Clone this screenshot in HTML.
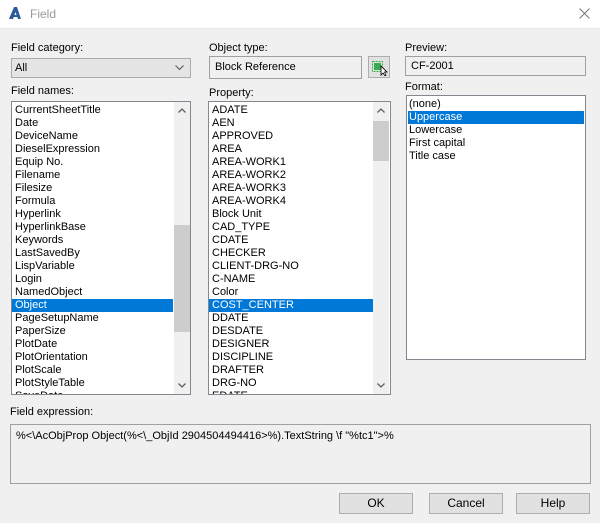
<!DOCTYPE html>
<html><head><meta charset="utf-8"><style>
*{box-sizing:border-box;margin:0;padding:0}
body{width:600px;height:523px;background:#f0f0f0;font-family:"Liberation Sans",Tahoma,sans-serif;font-size:11px;color:#000;position:relative;overflow:hidden}
.a{position:absolute}
.title{left:0;top:0;width:600px;height:29px;background:#fff;border-bottom:1px solid #e8e8e8}
.lbl{position:absolute;white-space:nowrap;line-height:13px}
.box{position:absolute;border:1px solid #828790;background:#fff;overflow:hidden}
.row{height:13px;line-height:13px;padding-left:3px;white-space:nowrap}
.sel{background:#0078d7;color:#fff}
.sb{position:absolute;top:0;right:0;width:16px;bottom:0;background:#f0f0f0}
.th{position:absolute;left:0;width:16px;background:#cdcdcd}
.ar{position:absolute;left:4px;width:8px;height:5px}
.btn{position:absolute;top:493px;height:21px;border:1px solid #adadad;background:#e1e1e1;text-align:center;line-height:19px;font-size:12px}
</style></head><body>
<div class="a title">
 <svg class="a" style="left:8px;top:6px" width="14" height="14" viewBox="0 0 14 14"><path d="M1 13 L6 1 H9 L13 13 H10 L7.5 6 L5 13Z" fill="#2a5a9a"/><path d="M5 10 H10" stroke="#2a5a9a" stroke-width="2"/></svg>
 <div class="lbl" style="left:30px;top:8px;font-size:12px;color:#999">Field</div>
 <svg class="a" style="left:579px;top:8px" width="11" height="11"><path d="M0.5 0.5L10.5 10.5M10.5 0.5L0.5 10.5" stroke="#777" stroke-width="1"/></svg>
</div>

<div class="lbl" style="left:11px;top:41px;top:42px">Field category:</div>
<div class="a" style="left:11px;top:58px;width:180px;height:20px;background:#e5e5e5;border:1px solid #acacac">
 <div class="lbl" style="left:3px;top:3px">All</div>
 <svg class="a" style="left:163px;top:6px" width="9" height="6"><path d="M0.5 0.5L4.5 4.5L8.5 0.5" stroke="#555" fill="none"/></svg>
</div>

<div class="lbl" style="left:11px;top:85px">Field names:</div>
<div class="box" style="left:11px;top:101px;width:180px;height:294px">
 <div style="padding-top:2px">
 <div class="row">CurrentSheetTitle</div><div class="row">Date</div><div class="row">DeviceName</div><div class="row">DieselExpression</div><div class="row">Equip No.</div><div class="row">Filename</div><div class="row">Filesize</div><div class="row">Formula</div><div class="row">Hyperlink</div><div class="row">HyperlinkBase</div><div class="row">Keywords</div><div class="row">LastSavedBy</div><div class="row">LispVariable</div><div class="row">Login</div><div class="row">NamedObject</div><div class="row sel" style="margin-right:17px">Object</div><div class="row">PageSetupName</div><div class="row">PaperSize</div><div class="row">PlotDate</div><div class="row">PlotOrientation</div><div class="row">PlotScale</div><div class="row">PlotStyleTable</div><div class="row">SaveDate</div>
 </div>
 <div class="sb"><svg class="ar" style="top:6px" viewBox="0 0 8 5"><path d="M0.5 4.5L4 1L7.5 4.5" stroke="#606060" stroke-width="1.3" fill="none"/></svg><div class="th" style="top:123px;height:107px"></div><svg class="ar" style="bottom:6px" viewBox="0 0 8 5"><path d="M0.5 0.5L4 4L7.5 0.5" stroke="#606060" stroke-width="1.3" fill="none"/></svg></div>
</div>

<div class="lbl" style="left:209px;top:42px">Object type:</div>
<div class="a" style="left:209px;top:56px;width:153px;height:23px;border:1px solid #a0a0a0;background:#f0f0f0">
 <div class="lbl" style="left:5px;top:4px">Block Reference</div>
</div>
<div class="a" style="left:368px;top:56px;width:22px;height:22px;border:1px solid #adadad;background:#e1e1e1">
 <svg class="a" style="left:2px;top:3px" width="18" height="16"><rect x="1.5" y="1.5" width="10" height="10" fill="none" stroke="#2db34a" stroke-dasharray="2,1"/><rect x="3" y="3" width="7" height="7" fill="#3aaa55"/><path d="M10 6 V15 L12 13 L14 16 L15 15 L13.5 12 H16Z" fill="#fff" stroke="#000" stroke-width="0.8"/></svg>
</div>

<div class="lbl" style="left:209px;top:87px">Property:</div>
<div class="box" style="left:208px;top:101px;width:183px;height:294px">
 <div style="padding-top:2px">
 <div class="row">ADATE</div><div class="row">AEN</div><div class="row">APPROVED</div><div class="row">AREA</div><div class="row">AREA-WORK1</div><div class="row">AREA-WORK2</div><div class="row">AREA-WORK3</div><div class="row">AREA-WORK4</div><div class="row">Block Unit</div><div class="row">CAD_TYPE</div><div class="row">CDATE</div><div class="row">CHECKER</div><div class="row">CLIENT-DRG-NO</div><div class="row">C-NAME</div><div class="row">Color</div><div class="row sel" style="margin-right:17px">COST_CENTER</div><div class="row">DDATE</div><div class="row">DESDATE</div><div class="row">DESIGNER</div><div class="row">DISCIPLINE</div><div class="row">DRAFTER</div><div class="row">DRG-NO</div><div class="row">EDATE</div>
 </div>
 <div class="sb" style="right:1px"><svg class="ar" style="top:6px" viewBox="0 0 8 5"><path d="M0.5 4.5L4 1L7.5 4.5" stroke="#606060" stroke-width="1.3" fill="none"/></svg><div class="th" style="top:19px;height:40px"></div><svg class="ar" style="bottom:6px" viewBox="0 0 8 5"><path d="M0.5 0.5L4 4L7.5 0.5" stroke="#606060" stroke-width="1.3" fill="none"/></svg></div>
</div>

<div class="lbl" style="left:405px;top:42px">Preview:</div>
<div class="a" style="left:405px;top:56px;width:181px;height:20px;border:1px solid #a0a0a0;background:#f0f0f0">
 <div class="lbl" style="left:5px;top:3px">CF-2001</div>
</div>
<div class="lbl" style="left:405px;top:81px">Format:</div>
<div class="box" style="left:406px;top:95px;width:180px;height:265px">
 <div style="padding-top:2px;padding-left:1px;padding-right:1px">
 <div class="row" style="padding-left:1px">(none)</div><div class="row sel" style="padding-left:1px">Uppercase</div><div class="row" style="padding-left:1px">Lowercase</div><div class="row" style="padding-left:1px">First capital</div><div class="row" style="padding-left:1px">Title case</div>
 </div>
</div>

<div class="lbl" style="left:10px;top:406px">Field expression:</div>
<div class="a" style="left:10px;top:424px;width:581px;height:60px;border:1px solid #a0a0a0;background:#f0f0f0">
 <div class="lbl" style="left:5px;top:5px">%&lt;\AcObjProp Object(%&lt;\_ObjId 2904504494416&gt;%).TextString \f "%tc1"&gt;%</div>
</div>

<div class="btn" style="left:339px;width:74px">OK</div>
<div class="btn" style="left:429px;width:74px">Cancel</div>
<div class="btn" style="left:516px;width:74px">Help</div>
</body></html>
